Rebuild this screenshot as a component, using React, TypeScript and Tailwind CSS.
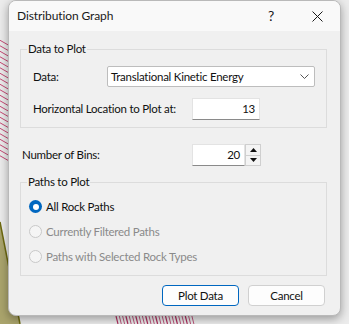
import React from "react";

const font = { fontFamily: 'Lato, "Noto Sans", sans-serif' };

function Radio({ checked, disabled, label }: { checked?: boolean; disabled?: boolean; label: string }) {
  return (
    <div className="flex h-[25px] items-center pl-[8px]">
      {checked ? (
        <div className="flex h-[13px] w-[13px] items-center justify-center rounded-full bg-[#0067c0]">
          <div className="h-[6px] w-[6px] rounded-full bg-white" />
        </div>
      ) : (
        <div className="h-[13px] w-[13px] rounded-full border border-[#c9c9c9] bg-[#f5f5f5]" />
      )}
      <span className={"ml-[4px] whitespace-nowrap " + (disabled ? "text-[#8a8a8a]" : "text-[#111]")}>{label}</span>
    </div>
  );
}

export default function App() {
  return (
    <div className="relative h-[324px] w-[349px] overflow-hidden bg-[#ececec] text-[11.5px] leading-[16px] tracking-[-0.25px]" style={font}>
      <svg className="absolute inset-0" width="349" height="324" viewBox="0 0 349 324">
        <polygon points="0,222 20,324 0,324" fill="#aaa46c" />
        <line x1="0" y1="222" x2="20" y2="324" stroke="#6e6a10" strokeWidth="1.5" />
        {Array.from({ length: 22 }).map((_, i) => (
          <line key={i} x1={-4} y1={38 + i * 5.5} x2={10} y2={46 + i * 5.5} stroke="#c23567" strokeWidth="0.9" />
        ))}
        {Array.from({ length: 24 }).map((_, i) => (
          <line key={"b" + i} x1={116 + i * 3.3} y1={316} x2={118 + i * 3.3} y2={324} stroke="#b03060" strokeWidth={i % 3 === 0 ? 1.2 : 0.8} />
        ))}
      </svg>

      <div className="relative ml-[8px] flex h-[316px] w-[333px] flex-col overflow-hidden rounded-[8px] border border-[#b9b9b9] bg-[#f0f0f0] shadow-[0_3px_10px_rgba(0,0,0,0.35)]">
        <div className="flex h-[30px] shrink-0 items-center bg-[#f9f9f9] pl-[8px]">
          <span className="text-[12px] tracking-[-0.1px] text-[#1a1a1a]">Distribution Graph</span>
          <div className="ml-auto flex h-full">
            <div className="flex w-[46px] items-center justify-center text-[14px] text-[#1a1a1a]">?</div>
            <div className="flex w-[46px] items-center justify-center">
              <svg width="11" height="11" viewBox="0 0 11 11">
                <path d="M0.5 0.5 L10.5 10.5 M10.5 0.5 L0.5 10.5" stroke="#1a1a1a" strokeWidth="1" />
              </svg>
            </div>
          </div>
        </div>

        <div className="flex flex-col px-[11px]">
          <fieldset className="mt-[10px] w-[307px] border border-[#dcdcdc] pb-[7px]">
            <legend className="ml-[6px] px-[1px] text-[#111]">Data to Plot</legend>
            <div className="mt-[9px] flex h-[21px] items-center pl-[12px]">
              <span className="w-[74px] text-[#111]">Data:</span>
              <div className="flex h-[21px] w-[208px] items-center rounded-[2px] border border-[#bdbdbd] bg-white pl-[3px] pr-[5px]">
                <span className="whitespace-nowrap text-[#111]">Translational Kinetic Energy</span>
                <svg className="ml-auto" width="9" height="5" viewBox="0 0 9 5">
                  <path d="M0.5 0.5 L4.5 4.5 L8.5 0.5" stroke="#555" strokeWidth="1" fill="none" />
                </svg>
              </div>
            </div>
            <div className="mt-[11px] flex h-[22px] items-center pl-[12px]">
              <span className="w-[159px] whitespace-nowrap text-[#111]">Horizontal Location to Plot at:</span>
              <div className="flex h-[22px] w-[68px] items-center justify-end border border-[#e3e3e3] border-b-[#8a8a8a] bg-white pr-[4px] text-[#111]">
                13
              </div>
            </div>
          </fieldset>

          <div className="mt-[16px] flex h-[22px] items-center pl-[2px]">
            <span className="w-[170px] whitespace-nowrap text-[#111]">Number of Bins:</span>
            <div className="flex h-[22px] w-[53px] items-center justify-end border border-[#e3e3e3] border-b-[#8a8a8a] bg-white pr-[4px] text-[#111]">
              20
            </div>
            <div className="flex h-[22px] w-[16px] flex-col border border-[#cfcfcf] bg-[#f4f4f4]">
              <div className="flex flex-1 items-center justify-center border-b border-[#cfcfcf]">
                <svg width="7" height="4" viewBox="0 0 7 4"><path d="M0 4 L3.5 0 L7 4 Z" fill="#111" /></svg>
              </div>
              <div className="flex flex-1 items-center justify-center">
                <svg width="7" height="4" viewBox="0 0 7 4"><path d="M0 0 L3.5 4 L7 0 Z" fill="#111" /></svg>
              </div>
            </div>
          </div>

          <fieldset className="mt-[8px] w-[307px] border border-[#dcdcdc] pb-[6px]">
            <legend className="ml-[6px] px-[1px] text-[#111]">Paths to Plot</legend>
            <div className="mt-[4px]">
              <Radio checked label="All Rock Paths" />
              <Radio disabled label="Currently Filtered Paths" />
              <Radio disabled label="Paths with Selected Rock Types" />
            </div>
          </fieldset>

          <div className="mt-[9px] flex justify-end gap-[9px] pr-[4px]">
            <div className="flex h-[21px] w-[77px] items-center justify-center rounded-[4px] border border-[#0067c0] bg-[#fdfdfd] text-[#111]">
              Plot Data
            </div>
            <div className="flex h-[21px] w-[77px] items-center justify-center rounded-[4px] border border-[#d0d0d0] bg-[#fdfdfd] text-[#111]">
              Cancel
            </div>
          </div>
        </div>
      </div>
    </div>
  );
}
